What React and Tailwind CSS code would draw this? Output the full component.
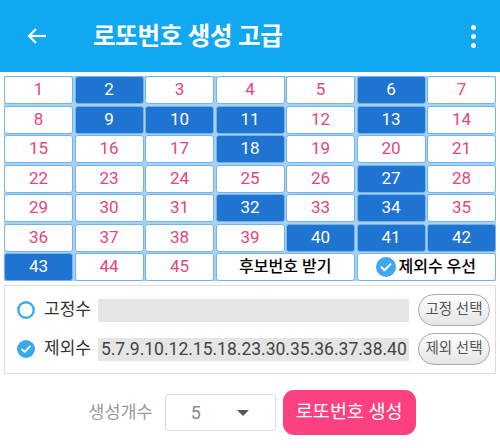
import React from "react";

const selected = [2, 6, 9, 10, 11, 13, 18, 27, 32, 34, 40, 41, 42, 43];
const nums = Array.from({ length: 45 }, (_, i) => i + 1);

const CheckCircle = ({ size = 17 }) => (
  <svg width={size} height={size} viewBox="0 0 20 20">
    <circle cx="10" cy="10" r="10" fill="#3aa9ee" />
    <path d="M5.5 10.3l3 3 6-6.2" fill="none" stroke="#fff" strokeWidth="2" strokeLinecap="round" strokeLinejoin="round" />
  </svg>
);

const RingCircle = () => (
  <svg width="18" height="18" viewBox="0 0 20 20">
    <circle cx="10" cy="10" r="8.6" fill="none" stroke="#3aa9ee" strokeWidth="2.6" />
  </svg>
);

const App = () => {
  return (
    <div className="w-[500px] h-[448px] bg-white overflow-hidden" style={{ fontFamily: "Roboto, 'Noto Sans CJK KR', sans-serif" }}>
      {/* header */}
      <div className="h-[72px] bg-[#10a8f0] flex items-center text-white">
        <div className="w-[74px] flex justify-center">
          <svg width="24" height="24" viewBox="0 0 24 24" fill="none" stroke="#fff" strokeWidth="2.2" strokeLinecap="square">
            <path d="M20 12H5" />
            <path d="M11 5l-7 7 7 7" strokeLinecap="butt" />
          </svg>
        </div>
        <div className="ml-[19px] mt-[3px] text-[24.5px] font-bold tracking-[-0.3px]">로또번호 생성 고급</div>
        <div className="ml-auto mr-[24px] flex flex-col gap-[4px]">
          <span className="w-[5px] h-[5px] rounded-full bg-white" />
          <span className="w-[5px] h-[5px] rounded-full bg-white" />
          <span className="w-[5px] h-[5px] rounded-full bg-white" />
        </div>
      </div>

      {/* number grid */}
      <div className="px-[4px] pt-[4px]">
        <div className="grid grid-cols-7 gap-[1.5px] bg-[#a9d2f2]">
          {nums.map((n) => {
            const on = selected.includes(n);
            return (
              <div
                key={n}
                className={`h-[28px] flex items-center justify-center rounded-[3px] border border-[#72b4ea] text-[17px] ${on ? "bg-[#1e74d0] text-white" : "bg-white text-[#e5457c]"}`}
              >
                {n}
              </div>
            );
          })}
          <div className="col-span-2 h-[28px] flex items-center justify-center rounded-[3px] border border-[#72b4ea] bg-white text-[16px] font-medium text-black">
            후보번호 받기
          </div>
          <div className="col-span-2 h-[28px] flex items-center justify-center gap-[2px] rounded-[3px] border border-[#72b4ea] bg-white text-[16px] font-medium text-black">
            <CheckCircle size={20} />
            <span>제외수 우선</span>
          </div>
        </div>
      </div>

      {/* fixed / exclude box */}
      <div className="mx-[4px] mt-[4px] h-[89px] border border-[#dcdcdc] flex flex-col justify-center gap-[7px] pl-[12px] pr-[5px]">
        <div className="flex items-center h-[32px]">
          <RingCircle />
          <span className="ml-[9px] text-[17px] text-[#333]">고정수</span>
          <div className="ml-[7px] w-[311px] h-[23px] bg-[#e5e5e5]" />
          <button className="ml-auto w-[72px] h-[32px] rounded-full border border-[#a8a8a8] bg-gradient-to-b from-white to-[#e4e4e4] text-[14.5px] text-[#555]">
            고정 선택
          </button>
        </div>
        <div className="flex items-center h-[32px]">
          <CheckCircle size={18} />
          <span className="ml-[9px] text-[17px] text-[#333]">제외수</span>
          <div className="ml-[7px] w-[311px] h-[23px] bg-[#e5e5e5] flex items-center pl-[3px] text-[17.5px] text-[#444] whitespace-nowrap overflow-hidden">
            5.7.9.10.12.15.18.23.30.35.36.37.38.40
          </div>
          <button className="ml-auto w-[72px] h-[32px] rounded-full border border-[#a8a8a8] bg-gradient-to-b from-white to-[#e4e4e4] text-[14.5px] text-[#555]">
            제외 선택
          </button>
        </div>
      </div>

      {/* bottom controls */}
      <div className="mt-[16px] flex items-center justify-center pl-[4px]">
        <span className="text-[17.5px] text-[#9a9a9a]">생성개수</span>
        <div className="ml-[12px] w-[111px] h-[37px] border border-[#dddddd] rounded-[3px] flex items-center pl-[25px] pr-[26px]">
          <span className="text-[18px] text-[#888]">5</span>
          <span className="ml-auto w-0 h-0 border-l-[6px] border-r-[6px] border-t-[6px] border-l-transparent border-r-transparent border-t-[#555]" />
        </div>
        <button className="ml-[7px] w-[133px] h-[45px] rounded-[11px] bg-[#fd4180] text-white text-[18.5px]">
          로또번호 생성
        </button>
      </div>
    </div>
  );
};

export default App;
